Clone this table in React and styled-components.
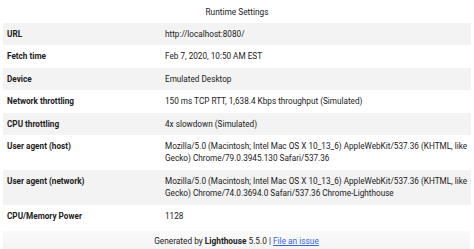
import React from 'react'
import styled, { createGlobalStyle } from 'styled-components'

const GlobalStyle = createGlobalStyle`
  body {
    margin: 0;
    background: #ffffff;
    font-family: Roboto, "Liberation Sans", sans-serif;
    color: #212121;
  }
`

const Page = styled.div`
  width: 474px;
  height: 249px;
  overflow: hidden;
  display: flex;
  flex-direction: column;
`

const Title = styled.div`
  height: 22px;
  display: flex;
  align-items: center;
  justify-content: center;
  font-size: 8.3px;
  padding-top: 1px;
`

const Table = styled.div`
  margin: 0 3px 0 3px;
  display: flex;
  flex-direction: column;
`

const Row = styled.div`
  display: grid;
  grid-template-columns: 162px 1fr;
  background: ${({ $striped }) => ($striped ? '#f3f3f3' : 'transparent')};
  font-size: 8.2px;
  line-height: 12.4px;
`

const Label = styled.div`
  padding: 5px 4px;
  font-weight: 700;
`

const Value = styled.div`
  padding: 5px 0;
`

const Footer = styled.div`
  margin: 4px 4px 0 3px;
  flex: 1;
  background: linear-gradient(#fafafa, #f4f4f4);
  display: flex;
  justify-content: center;
  padding-top: 5px;
  font-size: 8.3px;
`

const Link = styled.a`
  color: #3367d6;
  text-decoration: underline;
`

const rows = [
  ['URL', 'http://localhost:8080/'],
  ['Fetch time', 'Feb 7, 2020, 10:50 AM EST'],
  ['Device', 'Emulated Desktop'],
  ['Network throttling', '150 ms TCP RTT, 1,638.4 Kbps throughput (Simulated)'],
  ['CPU throttling', '4x slowdown (Simulated)'],
  [
    'User agent (host)',
    'Mozilla/5.0 (Macintosh; Intel Mac OS X 10_13_6) AppleWebKit/537.36 (KHTML, like Gecko) Chrome/79.0.3945.130 Safari/537.36',
  ],
  [
    'User agent (network)',
    'Mozilla/5.0 (Macintosh; Intel Mac OS X 10_13_6) AppleWebKit/537.36 (KHTML, like Gecko) Chrome/74.0.3694.0 Safari/537.36 Chrome-Lighthouse',
  ],
  ['CPU/Memory Power', '1128'],
]

export default function App() {
  return (
    <Page>
      <GlobalStyle />
      <Title>Runtime Settings</Title>
      <Table>
        {rows.map(([label, value], i) => (
          <Row key={label} $striped={i % 2 === 0}>
            <Label>{label}</Label>
            <Value>{value}</Value>
          </Row>
        ))}
      </Table>
      <Footer>
        <span>
          Generated by <b>Lighthouse</b> 5.5.0 | <Link href="#">File an issue</Link>
        </span>
      </Footer>
    </Page>
  )
}
